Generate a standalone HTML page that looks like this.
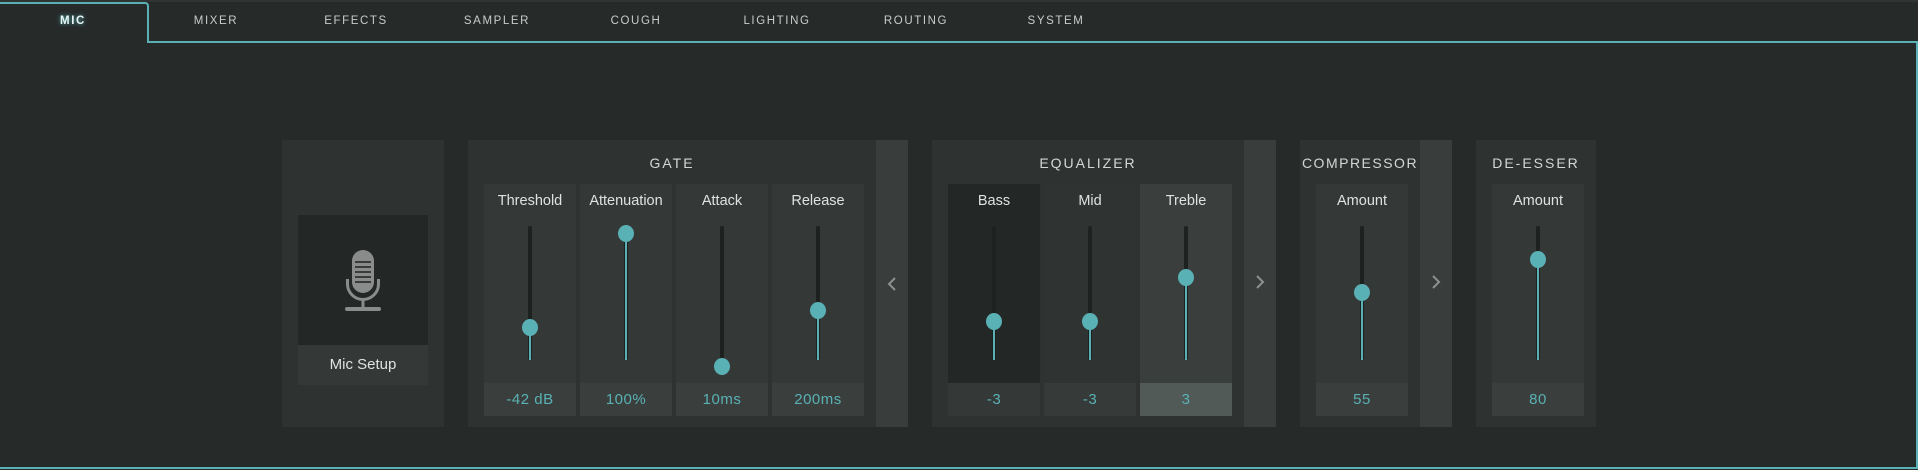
<!DOCTYPE html>
<html><head><meta charset="utf-8"><style>
*{margin:0;padding:0;box-sizing:border-box}
body{width:1918px;height:470px;background:#262a29;position:relative;overflow:hidden;font-family:"Liberation Sans",sans-serif;color:#d4d7d6}
.a{position:absolute}
.topline{left:0;top:0;width:1918px;height:2px;background:#303433}
.tab{position:absolute;top:15px;font-size:11.5px;letter-spacing:1.6px;color:#c8cccb;transform:translateX(-50%)}
.frame{left:147px;top:41px;width:1771px;height:428px;border-top:2px solid #5ab1b5;border-right:2px solid #5ab1b5}
.bottom{left:0;top:467px;width:1918px;height:2px;background:#5ab1b5}
.mictab{left:0;top:2px;width:149px;height:41px;border-top:2px solid #5ab1b5;border-right:2px solid #5ab1b5;border-radius:0 4px 0 0;background:#262a29}
.panel{background:#2e3231}
.strip{background:#393e3c}
.title{font-size:14px;letter-spacing:2px;color:#d4d7d6;text-align:center}
.col{position:absolute;top:184px;width:92px;height:232px;background:#343837}
.col .lb{position:absolute;top:9px;width:100%;text-align:center;font-size:14.5px;color:#dfe2e1}
.col .tr{position:absolute;left:44px;top:42px;width:4px;height:134px;background:#1d2120;border-radius:2px}
.col .fl{position:absolute;left:45px;width:2px;background:#5ab1b5}
.col .th{position:absolute;left:38px;width:16px;height:17px;border-radius:50%;background:#5ab1b5}
.col .vl{position:absolute;left:0;bottom:0;width:100%;height:33px;background:#3a3f3d;text-align:center;line-height:33px;font-size:15px;color:#5ab1b5;letter-spacing:.5px}
.chev{position:absolute}
</style></head><body>
<div class="a topline"></div>
<div class="a frame"></div>
<div class="a bottom"></div>
<div class="a mictab"></div>
<div class="tab" style="left:73px;color:#e8f6f6;font-weight:bold;text-shadow:0 0 4px #5ab1b5">MIC</div>
<div class="tab" style="left:216px">MIXER</div>
<div class="tab" style="left:356px">EFFECTS</div>
<div class="tab" style="left:497px">SAMPLER</div>
<div class="tab" style="left:636px">COUGH</div>
<div class="tab" style="left:777px">LIGHTING</div>
<div class="tab" style="left:916px">ROUTING</div>
<div class="tab" style="left:1056px">SYSTEM</div>

<!-- Mic panel -->
<div class="a panel" style="left:282px;top:140px;width:162px;height:287px"></div>
<div class="a" style="left:298px;top:215px;width:130px;height:130px;background:#232726"></div>
<div class="a" style="left:298px;top:345px;width:130px;height:40px;background:#343837;text-align:center;line-height:40px;font-size:15px;color:#dfe2e1">Mic Setup</div>
<svg class="a" style="left:345px;top:249px" width="36" height="64" viewBox="0 0 36 64">
<rect x="7" y="1" width="22" height="43" rx="11" fill="#8a8c8b"/>
<g stroke="#232726" stroke-width="1.6"><line x1="10" y1="13" x2="26" y2="13"/><line x1="10" y1="18" x2="26" y2="18"/><line x1="10" y1="23" x2="26" y2="23"/><line x1="10" y1="28" x2="26" y2="28"/><line x1="10" y1="33" x2="26" y2="33"/></g>
<path d="M2.5 30 v5 a15.5 15.5 0 0 0 31 0 v-5" fill="none" stroke="#8a8c8b" stroke-width="3"/>
<line x1="18" y1="50" x2="18" y2="59" stroke="#8a8c8b" stroke-width="3"/>
<rect x="0" y="58" width="36" height="4" rx="2" fill="#8a8c8b"/>
</svg>

<!-- Gate -->
<div class="a panel" style="left:468px;top:140px;width:408px;height:287px"></div>
<div class="a strip" style="left:876px;top:140px;width:32px;height:287px"></div>
<svg class="chev" style="left:886px;top:276px" width="12" height="16"><path d="M9 2 L3 8 L9 14" fill="none" stroke="#8d9190" stroke-width="2"/></svg>
<div class="a title" style="left:468px;top:155px;width:408px">GATE</div>

<div class="col" style="left:484px"><div class="lb">Threshold</div><div class="tr"></div><div class="fl" style="top:144px;height:32px"></div><div class="th" style="top:135px"></div><div class="vl">-42 dB</div></div>
<div class="col" style="left:580px"><div class="lb">Attenuation</div><div class="tr"></div><div class="fl" style="top:50px;height:126px"></div><div class="th" style="top:41px"></div><div class="vl">100%</div></div>
<div class="col" style="left:676px"><div class="lb">Attack</div><div class="tr"></div><div class="th" style="top:174px"></div><div class="vl">10ms</div></div>
<div class="col" style="left:772px"><div class="lb">Release</div><div class="tr"></div><div class="fl" style="top:127px;height:49px"></div><div class="th" style="top:118px"></div><div class="vl">200ms</div></div>

<!-- EQ -->
<div class="a panel" style="left:932px;top:140px;width:312px;height:287px"></div>
<div class="a strip" style="left:1244px;top:140px;width:32px;height:287px"></div>
<svg class="chev" style="left:1254px;top:274px" width="12" height="16"><path d="M3 2 L9 8 L3 14" fill="none" stroke="#8d9190" stroke-width="2"/></svg>
<div class="a title" style="left:932px;top:155px;width:312px">EQUALIZER</div>
<div class="col" style="left:948px;background:#232726"><div class="lb">Bass</div><div class="tr"></div><div class="fl" style="top:138px;height:38px"></div><div class="th" style="top:129px"></div><div class="vl" style="background:#343837">-3</div></div>
<div class="col" style="left:1044px;background:#2f3332"><div class="lb">Mid</div><div class="tr"></div><div class="fl" style="top:138px;height:38px"></div><div class="th" style="top:129px"></div><div class="vl" style="background:#363a39">-3</div></div>
<div class="col" style="left:1140px;background:#3a3f3d"><div class="lb">Treble</div><div class="tr"></div><div class="fl" style="top:94px;height:82px"></div><div class="th" style="top:85px"></div><div class="vl" style="background:#525a57">3</div></div>

<!-- Compressor -->
<div class="a panel" style="left:1300px;top:140px;width:120px;height:287px"></div>
<div class="a strip" style="left:1420px;top:140px;width:32px;height:287px"></div>
<svg class="chev" style="left:1430px;top:274px" width="12" height="16"><path d="M3 2 L9 8 L3 14" fill="none" stroke="#8d9190" stroke-width="2"/></svg>
<div class="a title" style="left:1300px;top:155px;width:120px;letter-spacing:1.5px">COMPRESSOR</div>
<div class="col" style="left:1316px"><div class="lb">Amount</div><div class="tr"></div><div class="fl" style="top:109px;height:67px"></div><div class="th" style="top:100px"></div><div class="vl">55</div></div>

<!-- De-esser -->
<div class="a panel" style="left:1476px;top:140px;width:120px;height:287px"></div>
<div class="a title" style="left:1476px;top:155px;width:120px">DE-ESSER</div>
<div class="col" style="left:1492px"><div class="lb">Amount</div><div class="tr"></div><div class="fl" style="top:76px;height:100px"></div><div class="th" style="top:67px"></div><div class="vl">80</div></div>
</body></html>
